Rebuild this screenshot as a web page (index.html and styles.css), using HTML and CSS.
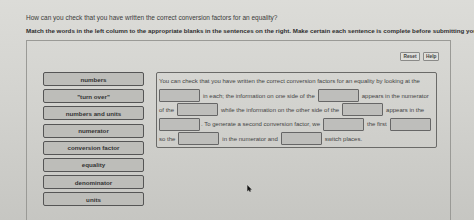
FILE: index.html
```html
<!DOCTYPE html>
<html lang="en">
<head>
  <meta charset="UTF-8" />
  <title>Conversion factors</title>
  <link rel="stylesheet" href="styles.css">
</head>
<body>
  <div class="page">
    <p class="question">How can you check that you have written the correct conversion factors for an equality?</p>
    <p class="instructions">Match the words in the left column to the appropriate blanks in the sentences on the right. Make certain each sentence is complete before submitting your answer.</p>

    <div class="panel">
      <div class="toolbar">
        <button class="tool-btn">Reset</button>
        <button class="tool-btn">Help</button>
      </div>

      <div class="work">
        <div class="tiles">
          <div class="tile">numbers</div>
          <div class="tile">"turn over"</div>
          <div class="tile">numbers and units</div>
          <div class="tile">numerator</div>
          <div class="tile">conversion factor</div>
          <div class="tile">equality</div>
          <div class="tile">denominator</div>
          <div class="tile">units</div>
        </div>

        <div class="sentences">
          <div class="line">
            <span>You can check that you have written the correct conversion factors for an equality by looking at the</span>
          </div>
          <div class="line">
            <span class="blank"></span>
            <span>in each; the information on one side of the</span>
            <span class="blank"></span>
            <span>appears in the numerator</span>
          </div>
          <div class="line">
            <span>of the</span>
            <span class="blank"></span>
            <span>while the information on the other side of the</span>
            <span class="blank"></span>
            <span>appears in the</span>
          </div>
          <div class="line">
            <span class="blank"></span>
            <span class="tight">. To generate a second conversion factor, we</span>
            <span class="blank"></span>
            <span>the first</span>
            <span class="blank"></span>
          </div>
          <div class="line">
            <span>so the</span>
            <span class="blank"></span>
            <span>in the numerator and</span>
            <span class="blank"></span>
            <span>switch places.</span>
          </div>
        </div>
      </div>
    </div>
  </div>

  <svg class="cursor" width="5" height="7" viewBox="0 0 5 7">
    <path d="M0.5 0.5 L0.5 6 L1.8 4.8 L2.8 6.6 L3.6 6.2 L2.7 4.5 L4.4 4.4 Z" fill="#111" stroke="#222" stroke-width="0.4"/>
  </svg>
</body>
</html>
```

FILE: styles.css
```css
* {
  margin: 0;
  padding: 0;
  box-sizing: border-box;
}

body {
  font-family: "Liberation Sans", Arial, sans-serif;
  color: #3a3a3a;
  background: linear-gradient(to bottom, #dcdcd8 0%, #d2d2ce 50%, #c6c6c2 100%);
  height: 220px;
  overflow: hidden;
  position: relative;
}

.page {
  padding: 13px 0 0 26px;
}

.question {
  font-size: 6.5px;
  line-height: 9px;
  white-space: nowrap;
}

.instructions {
  margin-top: 4px;
  font-size: 6.2px;
  line-height: 9px;
  font-weight: bold;
  color: #2e2e2e;
  white-space: nowrap;
}

.panel {
  margin-top: 5px;
  width: 425px;
  height: 180px;
  border: 1px solid #9a9a96;
  border-bottom: none;
  padding: 11px 10px 0 16px;
}

.toolbar {
  display: flex;
  justify-content: flex-end;
  gap: 3px;
  height: 9px;
}

.tool-btn {
  font-family: "Liberation Sans", Arial, sans-serif;
  font-size: 4.8px;
  font-weight: bold;
  color: #444;
  background: #dededa;
  border: 1px solid #8a8a88;
  border-radius: 1px;
  height: 9px;
  padding: 0 2px;
}

.tool-btn:first-child {
  width: 20px;
}

.tool-btn:last-child {
  width: 16px;
  margin-right: 1px;
}

.work {
  display: flex;
  gap: 12px;
  margin-top: 11px;
}

.tiles {
  display: flex;
  flex-direction: column;
  gap: 3.2px;
  width: 101px;
}

.tile {
  height: 14px;
  border: 1px solid #555;
  border-radius: 2px;
  background: #bdbdb9;
  font-size: 6.2px;
  font-weight: bold;
  color: #333;
  display: flex;
  align-items: center;
  justify-content: center;
}

.sentences {
  width: 281px;
  height: 76px;
  border: 1px solid #6a6a68;
  border-radius: 2px;
  padding: 1px 1px 3px 2px;
  font-size: 6px;
  color: #444;
}

.line {
  display: flex;
  align-items: center;
  gap: 3px;
  height: 14.4px;
  white-space: nowrap;
}

.line .tight {
  margin-left: -2px;
}

.blank {
  display: inline-block;
  width: 41px;
  height: 13px;
  border: 1px solid #666;
  border-radius: 1px;
  background: #bebebb;
}

.cursor {
  position: absolute;
  left: 247px;
  top: 185px;
}
```
